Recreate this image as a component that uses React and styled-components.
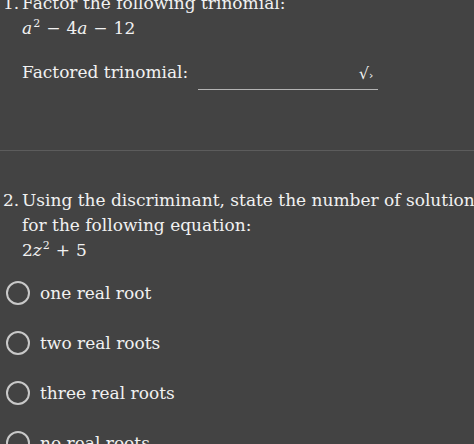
import React from "react";
import styled, { createGlobalStyle } from "styled-components";

const GlobalStyle = createGlobalStyle`
  html, body {
    margin: 0;
    padding: 0;
    background: #434343;
  }
  body {
    font-family: "DejaVu Serif", "Liberation Serif", serif;
    color: #f1f1f1;
    overflow: hidden;
  }
`;

const options = ["one real root", "two real roots", "three real roots", "no real roots"];

export default function App() {
  return (
    <>
      <GlobalStyle />
      <Page>
        <Question $top="-9px" $bottom="60px">
          <Num>1.</Num>
          <Body>
            <Line>Factor the following trinomial:</Line>
            <Line>
              <Var>a</Var>
              <Sup>2</Sup>
              <Op>−</Op>4<Var>a</Var>
              <Op>−</Op>12
            </Line>
            <AnswerRow>
              <span>Factored trinomial:</span>
              <AnswerField>
                <Keypad>
                  √<small>›</small>
                </Keypad>
              </AnswerField>
            </AnswerRow>
          </Body>
        </Question>
        <Divider />
        <Question $top="37px" $bottom="18px">
          <Num>2.</Num>
          <Body>
            <Line>Using the discriminant, state the number of solutions</Line>
            <Line>for the following equation:</Line>
            <Line>
              2<Var>z</Var>
              <Sup>2</Sup>
              <Op>+</Op>5
            </Line>
          </Body>
        </Question>
        <Options>
          {options.map((opt) => (
            <Option key={opt}>
              <Radio />
              <span>{opt}</span>
            </Option>
          ))}
        </Options>
      </Page>
    </>
  );
}

const Page = styled.div`
  width: 474px;
  height: 444px;
  overflow: hidden;
`;

const Question = styled.div`
  display: flex;
  padding-left: 3px;
  margin-top: ${({ $top }) => $top};
  margin-bottom: ${({ $bottom }) => $bottom};
  font-size: 17px;
  line-height: 25px;
  white-space: nowrap;
`;

const Num = styled.div`
  width: 19px;
  flex-shrink: 0;
`;

const Body = styled.div`
  display: flex;
  flex-direction: column;
`;

const Line = styled.div`
  height: 25px;
`;

const Var = styled.i`
  font-style: italic;
`;

const Sup = styled.sup`
  font-size: 11px;
  line-height: 0;
  margin-left: 1px;
`;

const Op = styled.span`
  margin: 0 6px;
`;

const AnswerRow = styled.div`
  display: flex;
  align-items: flex-start;
  margin-top: 19px;
  gap: 10px;
`;

const AnswerField = styled.div`
  width: 180px;
  height: 30px;
  border-bottom: 1.5px solid #b4b4b4;
  display: flex;
  justify-content: flex-end;
  align-items: center;
  padding-right: 5px;
  box-sizing: border-box;
`;

const Keypad = styled.span`
  font-family: "DejaVu Sans", sans-serif;
  font-size: 16px;
  color: #f4f4f4;
  small {
    font-size: 11px;
  }
`;

const Divider = styled.div`
  height: 1px;
  background: #5c5c5c;
`;

const Options = styled.div`
  display: flex;
  flex-direction: column;
  gap: 26px;
  padding-left: 6px;
`;

const Option = styled.div`
  display: flex;
  align-items: center;
  gap: 10px;
  height: 24px;
  font-size: 17px;
  white-space: nowrap;
`;

const Radio = styled.span`
  width: 24px;
  height: 24px;
  box-sizing: border-box;
  border: 2px solid #c9c9c9;
  border-radius: 50%;
  flex-shrink: 0;
`;
